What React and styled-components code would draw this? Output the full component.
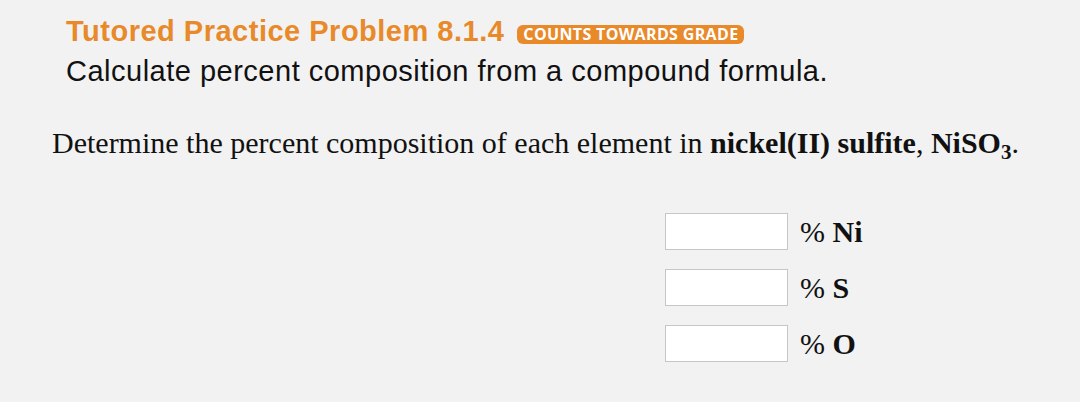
import React from "react";
import styled, { createGlobalStyle } from "styled-components";

const Global = createGlobalStyle`
  html, body {
    margin: 0;
    padding: 0;
    background: #f2f2f2;
  }
`;

const Page = styled.div`
  width: 1080px;
  height: 402px;
  background: #f2f2f2;
  box-sizing: border-box;
  padding: 14px 0 0 52px;
`;

const Header = styled.header`
  padding-left: 14px;
`;

const TitleRow = styled.div`
  display: flex;
  align-items: center;
  gap: 13px;
`;

const Title = styled.h1`
  margin: 0;
  font-family: "Liberation Sans", Arial, sans-serif;
  font-weight: 700;
  font-size: 29px;
  line-height: 34px;
  color: #e8892a;
  letter-spacing: 0.5px;
`;

const Badge = styled.span`
  font-family: "Open Sans", sans-serif;
  font-weight: 700;
  font-size: 16px;
  line-height: 19px;
  height: 19px;
  color: #fff;
  background: #e8892a;
  border-radius: 6px;
  padding: 0 6px;
  margin-top: 6px;
  letter-spacing: 0.35px;
`;

const Subtitle = styled.p`
  margin: 6px 0 0;
  font-family: "Liberation Sans", Arial, sans-serif;
  font-size: 29px;
  line-height: 34px;
  color: #111;
  letter-spacing: 0.5px;
`;

const Question = styled.p`
  margin: 37px 0 0;
  font-family: "Liberation Serif", "Times New Roman", serif;
  font-size: 30px;
  line-height: 36px;
  color: #111;

  sub {
    font-size: 21px;
    line-height: 0;
    vertical-align: -6px;
  }
`;

const Answers = styled.div`
  display: flex;
  flex-direction: column;
  gap: 19px;
  margin: 52px 0 0 613px;
`;

const Row = styled.label`
  display: flex;
  align-items: center;
  gap: 12px;
`;

const Field = styled.input`
  width: 123px;
  height: 37px;
  box-sizing: border-box;
  border: 1px solid #c6c6c6;
  background: #fff;
  margin: 0;
  outline: none;
`;

const Unit = styled.span`
  font-family: "Liberation Serif", "Times New Roman", serif;
  font-size: 30px;
  line-height: 36px;
  color: #111;

  b {
    font-weight: 700;
  }
`;

const elements = ["Ni", "S", "O"];

export default function App() {
  return (
    <Page>
      <Global />
      <Header>
        <TitleRow>
          <Title>Tutored Practice Problem 8.1.4</Title>
          <Badge>COUNTS TOWARDS GRADE</Badge>
        </TitleRow>
        <Subtitle>Calculate percent composition from a compound formula.</Subtitle>
      </Header>
      <Question>
        Determine the percent composition of each element in{" "}
        <b>nickel(II) sulfite</b>, <b>NiSO<sub>3</sub></b>.
      </Question>
      <Answers>
        {elements.map((el) => (
          <Row key={el}>
            <Field type="text" aria-label={`percent ${el}`} />
            <Unit>
              % <b>{el}</b>
            </Unit>
          </Row>
        ))}
      </Answers>
    </Page>
  );
}
